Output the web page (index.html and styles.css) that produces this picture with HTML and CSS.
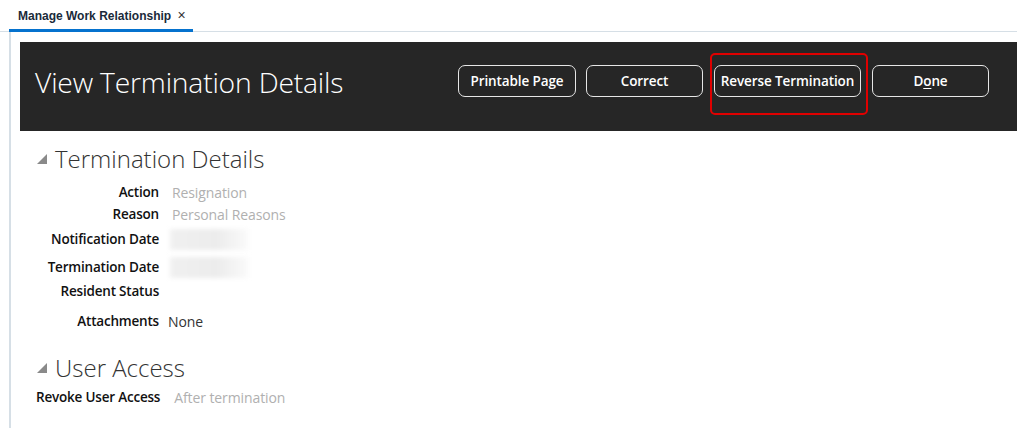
FILE: index.html
```html
<!DOCTYPE html>
<html>
<head>
<meta charset="utf-8">
<link rel="stylesheet" href="styles.css">
</head>
<body>
<div class="tabbar">
  <div class="tab">Manage Work Relationship <span class="tab-close">×</span></div>
</div>
<div class="panel">
  <div class="header">
    <h1 class="title">View Termination Details</h1>
    <div class="actions">
      <button class="btn btn-118 btn-first">Printable Page</button>
      <button class="btn btn-117">Correct</button>
      <span class="highlight"><button class="btn btn-147">Reverse Termination</button></span>
      <button class="btn btn-117">D<u>o</u>ne</button>
    </div>
  </div>

  <div class="section">
    <h2 class="sec-title"><span class="tri"></span>Termination Details</h2>
    <div class="form">
      <div class="row r-action"><span class="lbl">Action</span><span class="val">Resignation</span></div>
      <div class="row r-reason"><span class="lbl">Reason</span><span class="val">Personal Reasons</span></div>
      <div class="row r-date"><span class="lbl">Notification Date</span><span class="blur"></span></div>
      <div class="row r-date"><span class="lbl">Termination Date</span><span class="blur"></span></div>
      <div class="row r-res"><span class="lbl">Resident Status</span><span class="val"></span></div>
      <div class="row r-att"><span class="lbl">Attachments</span><span class="val dark">None</span></div>
    </div>
  </div>

  <div class="section sec2">
    <h2 class="sec-title"><span class="tri"></span>User Access</h2>
    <div class="row r-revoke"><span class="lbl lbl-left">Revoke User Access</span><span class="val">After termination</span></div>
  </div>
</div>
</body>
</html>
```
FILE: styles.css
```css
html, body {
  margin: 0;
  padding: 0;
  background: #ffffff;
}
body {
  font-family: "Open Sans", "Liberation Sans", sans-serif;
  color: #000;
  overflow: hidden;
  height: 428px;
}
.tabbar {
  height: 31px;
  border-bottom: 1px solid #d6dfe6;
  padding-left: 9px;
  display: flex;
  align-items: flex-end;
}
.tab {
  width: 184px;
  height: 32px;
  box-sizing: border-box;
  border-bottom: 3px solid #0572ce;
  margin-bottom: -1px;
  padding-left: 9px;
  padding-top: 7px;
  font-family: "Liberation Sans", Arial, sans-serif;
  font-weight: bold;
  font-size: 12px;
  color: #1a2a3a;
  white-space: nowrap;
}
.tab-close {
  font-weight: normal;
  font-size: 14px;
  margin-left: 3px;
  color: #333;
}
.panel {
  margin-left: 9px;
  border-left: 2px solid #d6dfe6;
  padding: 10px 0 0 9px;
  height: 400px;
}
.header {
  background: #262626;
  height: 89px;
  display: flex;
  align-items: center;
  justify-content: space-between;
  padding: 0 28px 0 15px;
}
.title {
  margin: 0;
  font-weight: 300;
  font-size: 28.3px;
  color: #fff;
  letter-spacing: -0.2px;
  position: relative;
  top: -5px;
}
.actions {
  display: flex;
  align-items: center;
  gap: 11px;
  margin-top: -11px;
}
.btn {
  height: 32px;
  box-sizing: border-box;
  background: transparent;
  border: 1px solid #e6e6e6;
  border-radius: 7px;
  color: #fff;
  font-family: "Open Sans", sans-serif;
  font-weight: 600;
  font-size: 13.5px;
  padding: 0;
  letter-spacing: -0.1px;
}
.btn-first { margin-right: -1px; }
.btn-118 { width: 118px; }
.btn-117 { width: 117px; }
.btn-147 { width: 147px; }
.btn u { text-underline-offset: 2px; }
.highlight {
  position: relative;
  display: flex;
}
.highlight::after {
  content: "";
  position: absolute;
  left: -4px;
  right: -7px;
  top: -12px;
  bottom: -18px;
  border: 2px solid #e00000;
  border-radius: 5px;
}
.section {
  padding-left: 17px;
}
.sec-title {
  margin: 12px 0 0 0;
  font-weight: 300;
  font-size: 24px;
  color: #333;
  display: flex;
  align-items: center;
  height: 30px;
}
.tri {
  width: 0;
  height: 0;
  border-left: 10px solid transparent;
  border-bottom: 10px solid #8a8a8a;
  margin-right: 8px;
  margin-top: 2px;
}
.form {
  margin-top: 8px;
}
.row {
  display: flex;
  align-items: center;
  font-size: 13px;
}
.lbl {
  width: 122px;
  text-align: right;
  font-weight: 600;
  color: #111;
  padding-right: 13px;
  white-space: nowrap;
  font-size: 13.5px;
  letter-spacing: -0.2px;
}
.lbl-left {
  width: auto;
  text-align: left;
  margin-left: -1px;
  padding-right: 14px;
}
.val {
  color: #b0b0b0;
  font-size: 14px;
  letter-spacing: -0.1px;
}
.val.dark { color: #333; margin-left: -4px; }
.r-action { height: 22px; }
.r-reason { height: 22px; }
.r-date { height: 28px; }
.blur {
  width: 78px;
  height: 21px;
  background: linear-gradient(90deg, #f0f0f0 0%, #ececec 60%, #fafafa 100%);
  filter: blur(2px);
  margin-left: -2px;
}
.r-res { height: 20px; }
.r-att { height: 40px; }
.sec2 .sec-title { margin-top: 11px; }
.r-revoke { height: 30px; }
```
